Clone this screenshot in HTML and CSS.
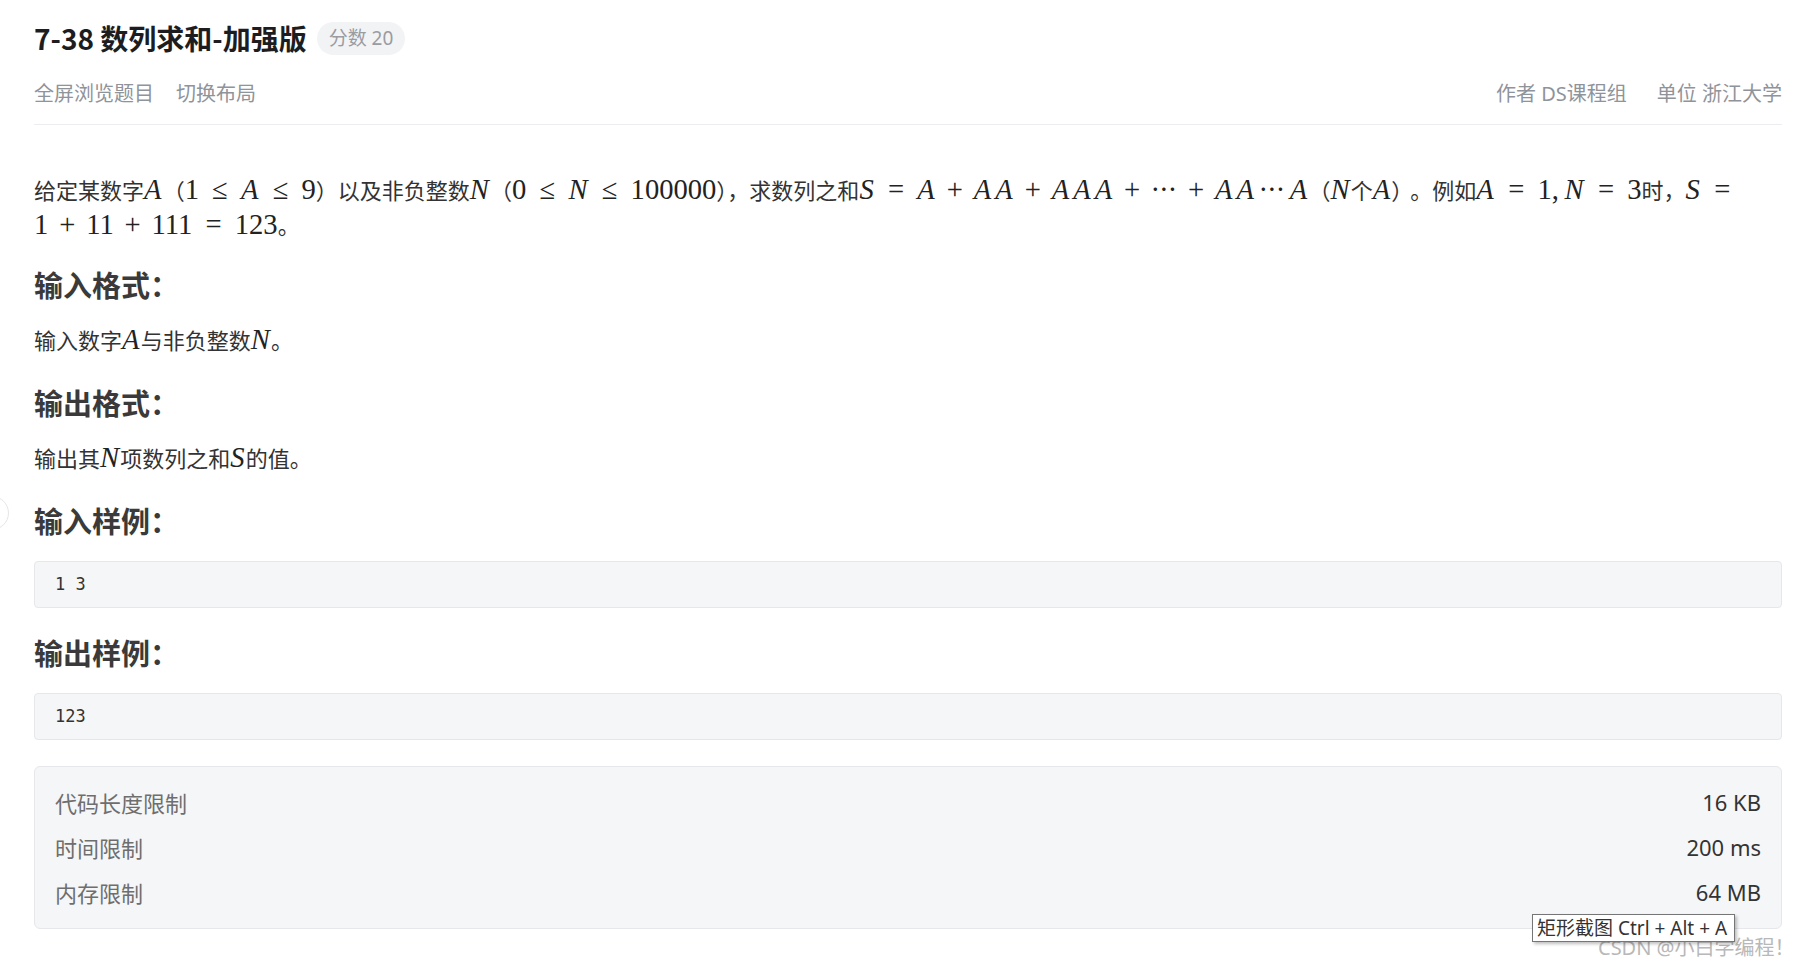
FILE: index.html
```html
<!DOCTYPE html>
<html lang="zh-CN">
<head>
<meta charset="UTF-8" />
<meta name="viewport" content="width=device-width, initial-scale=1" />
<title>7-38 数列求和-加强版</title>
<link rel="stylesheet" href="styles.css">
</head>
<body>

<div class="problem">

  <!-- CABEÇALHO DO PROBLEMA -->
  <div class="problem-header">
    <div class="title-row">
      <h1 class="title">7-38 数列求和-加强版</h1>
      <span class="score">分数 20</span>
    </div>
    <div class="meta-row">
      <div class="actions">
        <a href="#">全屏浏览题目</a>
        <a href="#">切换布局</a>
      </div>
      <div class="info">
        <span>作者 DS课程组</span>
        <span>单位 浙江大学</span>
      </div>
    </div>
  </div>

  <!-- ENUNCIADO -->
  <div class="problem-body">
    <p class="intro">给定某数字<span class="math"><i>A</i></span>（<span class="math">1<span class="rel">≤</span><i>A</i><span class="rel">≤</span>9</span>）以及非负整数<span class="math"><i>N</i></span>（<span class="math">0<span class="rel">≤</span><i>N</i><span class="rel">≤</span>100000</span>），求数列之和<span class="math"><i>S</i><span class="rel">=</span><i>A</i><span class="bin">+</span><i>AA</i><span class="bin">+</span><i>AAA</i><span class="bin">+</span><span class="cdots">⋯</span><span class="bin">+</span><i>AA</i><span class="cdots inner">⋯</span><i>A</i></span>（<span class="math"><i>N</i></span>个<span class="math"><i>A</i></span>）<span class="punct">。</span>例如<span class="math"><i>A</i><span class="rel">=</span>1,<span class="thin"></span><i>N</i><span class="rel">=</span>3</span>时，<span class="math"><i>S</i><span class="rel">=</span></span><br><span class="math">1<span class="bin">+</span>11<span class="bin">+</span>111<span class="rel">=</span>123</span>。</p>

    <h3>输入格式：</h3>
    <p>输入数字<span class="math"><i>A</i></span>与非负整数<span class="math"><i>N</i></span>。</p>

    <h3>输出格式：</h3>
    <p>输出其<span class="math"><i>N</i></span>项数列之和<span class="math"><i>S</i></span>的值。</p>

    <h3>输入样例：</h3>
    <pre class="sample">1 3</pre>

    <h3 class="after-sample">输出样例：</h3>
    <pre class="sample">123</pre>

    <div class="limits">
      <div class="limit-row"><span class="limit-label">代码长度限制</span><span class="limit-value">16 KB</span></div>
      <div class="limit-row"><span class="limit-label">时间限制</span><span class="limit-value">200 ms</span></div>
      <div class="limit-row"><span class="limit-label">内存限制</span><span class="limit-value">64 MB</span></div>
    </div>
  </div>

</div>

<!-- botão lateral recolhido -->
<span class="side-toggle"></span>

<!-- sobreposições da captura -->
<div class="watermark">CSDN @小白学编程！</div>
<div class="snip-tip">矩形截图 Ctrl + Alt + A</div>

</body>
</html>
```

FILE: styles.css
```css
/* BASE */
* {
  box-sizing: border-box;
}
body {
  margin: 0;
  background: #fff;
  color: #333;
  font-family: "Noto Sans", "Noto Sans CJK SC", sans-serif;
  overflow: hidden;
}
a {
  color: inherit;
  text-decoration: none;
}

/* CONTAINER */
.problem {
  padding: 18px 15px 0 34px;
}

/* CABEÇALHO */
.title-row {
  display: flex;
  align-items: center;
  height: 40px;
}
.title {
  margin: 0;
  font-size: 28px;
  line-height: 40px;
  font-weight: 700;
  color: #1d1d1f;
  font-family: "Noto Sans CJK SC", sans-serif;
}
.score {
  margin-left: 10px;
  height: 33px;
  padding: 0 12px;
  border-radius: 17px;
  background: #f2f3f5;
  color: #9a9ca2;
  font-size: 19px;
  line-height: 33px;
}
.meta-row {
  display: flex;
  justify-content: space-between;
  margin-top: 22px;
  padding-bottom: 16px;
  border-bottom: 1px solid #ebedf0;
  font-size: 20px;
  line-height: 28px;
  color: #8f939a;
}
.actions,
.info {
  display: flex;
  gap: 22px;
}
.info {
  gap: 30px;
}

/* ENUNCIADO */
.problem-body p {
  margin: 18px 0 0;
  font-size: 22px;
  line-height: 35px;
  color: #333;
  font-family: "Noto Sans CJK SC", sans-serif;
}
.problem-body p.intro {
  margin-top: 47px;
}
.problem-body h3 {
  margin: 25px 0 0;
  font-size: 29px;
  line-height: 40px;
  font-weight: 700;
  color: #3a3a3a;
  font-family: "Noto Sans CJK SC", sans-serif;
}
.problem-body .intro + h3 {
  margin-top: 22px;
}
.problem-body h3.after-sample {
  margin-top: 24px;
}
.punct {
  margin-left: 8px;
}

/* FÓRMULAS */
.math {
  font-family: "Liberation Serif", "DejaVu Serif", serif;
  font-size: 1.3em;
  line-height: 0;
  white-space: nowrap;
  color: #222;
}
.math i {
  letter-spacing: 0.14em;
  margin-right: -0.1em;
}
.math .rel {
  margin: 0 0.46em;
}
.math .bin {
  margin: 0 0.38em;
}
.math .cdots {
  font-family: "DejaVu Serif", serif;
  font-size: 0.9em;
}
.math .cdots.inner {
  margin: 0 0.17em;
}
.math .thin {
  margin-right: 0.2em;
}

/* EXEMPLOS */
.sample {
  margin: 21px 0 0;
  height: 47px;
  padding: 0 20px;
  background: #f5f6f8;
  border: 1px solid #e5e7eb;
  border-radius: 4px;
  font-family: "DejaVu Sans Mono", "Liberation Mono", monospace;
  font-size: 17px;
  line-height: 45px;
  color: #333;
}

/* LIMITES */
.limits {
  margin-top: 26px;
  padding: 13px 20px;
  background: #f5f6f8;
  border: 1px solid #e5e7eb;
  border-radius: 6px;
  font-size: 22px;
}
.limit-row {
  display: flex;
  justify-content: space-between;
  line-height: 45px;
}
.limit-label {
  color: #6e6e6e;
  font-family: "Noto Sans CJK SC", sans-serif;
}
.limit-value {
  color: #333;
}

/* SOBREPOSIÇÕES */
.side-toggle {
  position: absolute;
  left: -25px;
  top: 496px;
  width: 34px;
  height: 34px;
  border-radius: 50%;
  border: 1px solid #e6e6e6;
  background: #fff;
}
.watermark {
  position: absolute;
  left: 1598px;
  top: 935px;
  font-size: 20px;
  line-height: 26px;
  color: #b8b8b8;
  font-family: "Noto Sans", "Noto Sans CJK SC", sans-serif;
  white-space: nowrap;
}
.snip-tip {
  position: absolute;
  left: 1532px;
  top: 914px;
  width: 203px;
  height: 28px;
  padding: 0 4px;
  background: #fff;
  border: 1px solid #767676;
  box-shadow: 2px 2px 3px rgba(0, 0, 0, 0.25);
  font-family: "Noto Sans", "Noto Sans CJK SC", sans-serif;
  font-size: 19px;
  line-height: 26px;
  color: #333;
  white-space: nowrap;
}
```
